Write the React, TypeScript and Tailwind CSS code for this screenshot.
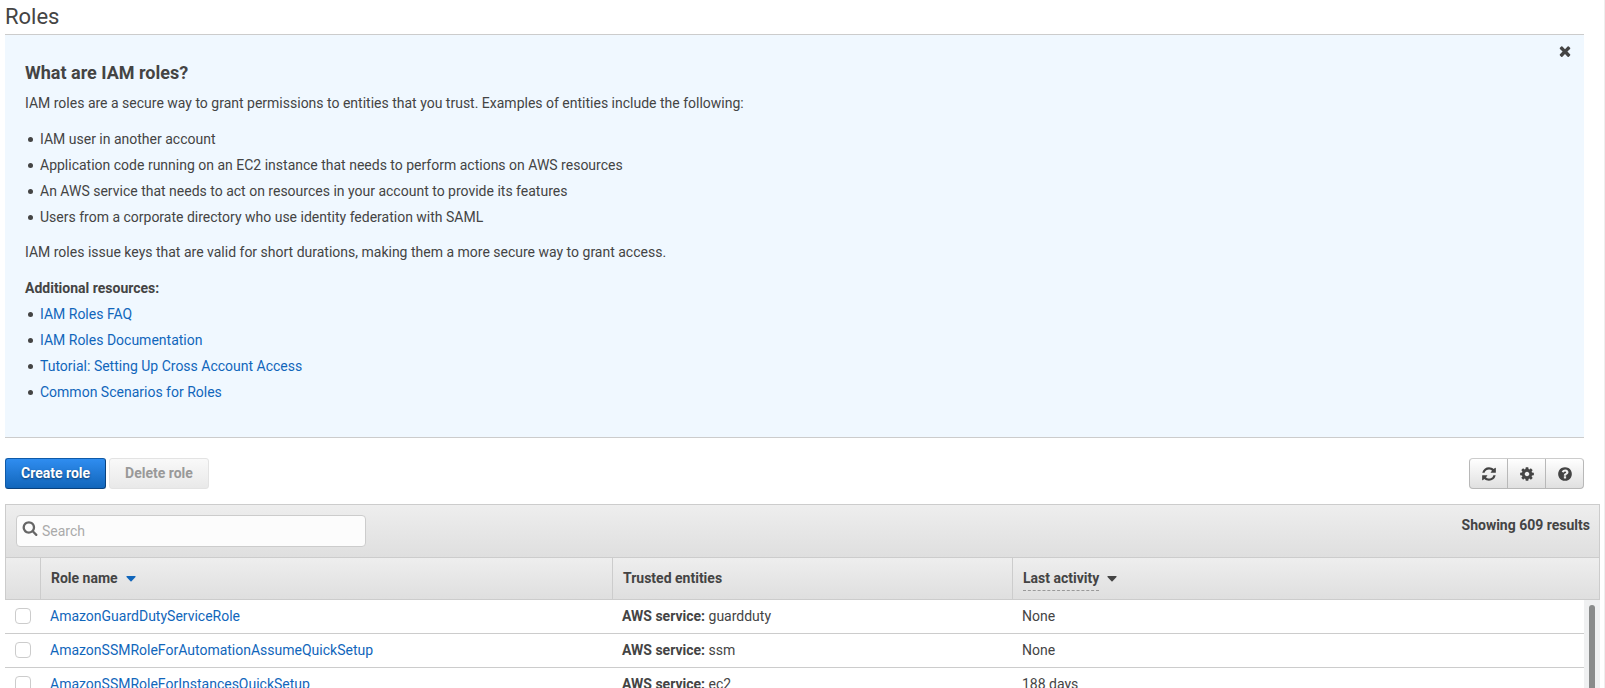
import { useState } from 'react';

const ICONS = {
  close:
    'M1490 1322q0 40-28 68l-136 136q-28 28-68 28t-68-28l-294-294-294 294q-28 28-68 28t-68-28l-136-136q-28-28-28-68t28-68l294-294-294-294q-28-28-28-68t28-68l136-136q28-28 68-28t68 28l294 294 294-294q28-28 68-28t68 28l136 136q28 28 28 68t-28 68l-294 294 294 294q28 28 28 68z',
  refresh:
    'M1639 1056q0 5-1 7-64 268-268 434.5t-478 166.5q-146 0-282.5-55t-243.5-157l-129 129q-19 19-45 19t-45-19-19-45v-448q0-26 19-45t45-19h448q26 0 45 19t19 45-19 45l-137 137q71 66 161 102t187 36q134 0 250-65t186-179q11-17 53-117 8-23 30-23h192q13 0 22.5 9.5t9.5 22.5zm25-800v448q0 26-19 45t-45 19h-448q-26 0-45-19t-19-45 19-45l138-138q-148-137-349-137-134 0-250 65t-186 179q-11 17-53 117-8 23-30 23h-199q-13 0-22.5-9.5t-9.5-22.5v-7q65-268 270-434.5t480-166.5q146 0 284 55.5t245 156.5l130-129q19-19 45-19t45 19 19 45z',
  cog: 'M1152 896q0-106-75-181t-181-75-181 75-75 181 75 181 181 75 181-75 75-181zm512-109v222q0 12-8 23t-20 13l-185 28q-19 54-39 91 35 50 107 138 10 12 10 25t-9 23q-27 37-99 108t-94 71q-12 0-26-9l-138-108q-44 23-91 38-16 136-29 186-7 28-36 28h-222q-14 0-24.5-8.5t-11.5-21.5l-28-184q-49-16-90-37l-141 107q-10 9-25 9-14 0-25-11-126-114-165-168-7-10-7-23 0-12 8-23 15-21 51-66.5t54-70.5q-27-50-41-99l-183-27q-13-2-21-12.5t-8-23.5v-222q0-12 8-23t19-13l186-28q14-46 39-92-40-57-107-138-10-12-10-24 0-10 9-23 26-36 98.5-107.5t94.5-71.5q13 0 26 10l138 107q44-23 91-38 16-136 29-186 7-28 36-28h222q14 0 24.5 8.5t11.5 21.5l28 184q49 16 90 37l142-107q9-9 24-9 13 0 25 10 129 119 165 170 7 8 7 22 0 12-8 23-15 21-51 66.5t-54 70.5q26 50 41 98l183 28q13 2 21 12.5t8 23.5z',
  help: 'M1024 1376v-192q0-14-9-23t-23-9h-192q-14 0-23 9t-9 23v192q0 14 9 23t23 9h192q14 0 23-9t9-23zm256-672q0-88-55.5-163t-138.5-116-170-41q-243 0-371 213-15 24 8 42l132 100q7 6 19 6 16 0 25-12 53-68 86-92 34-24 86-24 48 0 85.5 26t37.5 59q0 38-20 61t-68 45q-63 28-115.5 86.5t-52.5 125.5v36q0 14 9 23t23 9h192q14 0 23-9t9-23q0-19 21.5-49.5t54.5-49.5q32-18 49-28.5t46-35 44.5-48 28-60.5 12.5-81zm384 192q0 209-103 385.5t-279.5 279.5-385.5 103-385.5-103-279.5-279.5-103-385.5 103-385.5 279.5-279.5 385.5-103 385.5 103 279.5 279.5 103 385.5z',
  search:
    'M1216 832q0-185-131.5-316.5t-316.5-131.5-316.5 131.5-131.5 316.5 131.5 316.5 316.5 131.5 316.5-131.5 131.5-316.5zm512 832q0 52-38 90t-90 38q-54 0-90-38l-343-342q-179 124-399 124-143 0-273.5-55.5t-225-150-150-225-55.5-273.5 55.5-273.5 150-225 225-150 273.5-55.5 273.5 55.5 225 150 150 225 55.5 273.5q0 220-124 399l343 343q37 37 37 90z',
};

const ENTITIES = [
  'IAM user in another account',
  'Application code running on an EC2 instance that needs to perform actions on AWS resources',
  'An AWS service that needs to act on resources in your account to provide its features',
  'Users from a corporate directory who use identity federation with SAML',
];

const RESOURCES = [
  'IAM Roles FAQ',
  'IAM Roles Documentation',
  'Tutorial: Setting Up Cross Account Access',
  'Common Scenarios for Roles',
];

const ROLES = [
  { name: 'AmazonGuardDutyServiceRole', service: 'guardduty', activity: 'None' },
  { name: 'AmazonSSMRoleForAutomationAssumeQuickSetup', service: 'ssm', activity: 'None' },
  { name: 'AmazonSSMRoleForInstancesQuickSetup', service: 'ec2', activity: '188 days' },
];

function Icon({ name, className = '' }: { name: keyof typeof ICONS; className?: string }) {
  return (
    <svg viewBox="0 0 1792 1792" fill="currentColor" aria-hidden="true" className={`size-4 ${className}`}>
      <path d={ICONS[name]} />
    </svg>
  );
}

function Caret({ className = '' }: { className?: string }) {
  return (
    <svg viewBox="0 0 10 6" fill="currentColor" aria-hidden="true" className={`w-[10px] h-[6px] ${className}`}>
      <path d="M0.8 0h8.4q.6.3.3.9L5.5 5.2q-.5.4-1 0L.5.9Q.2.3.8 0z" />
    </svg>
  );
}

function Bullet({ children }: { children: React.ReactNode }) {
  return (
    <li className="flex items-center gap-[7px] pl-[3px] before:size-[5px] before:rounded-full before:bg-[#444]">
      {children}
    </li>
  );
}

function ToolButton({ icon, label }: { icon: keyof typeof ICONS; label: string }) {
  return (
    <button
      type="button"
      aria-label={label}
      className="flex items-center justify-center w-[38px] last:w-[37px] h-full border-r border-[#b8b8b8] last:border-r-0 cursor-pointer"
    >
      <Icon name={icon} />
    </button>
  );
}

export default function App() {
  const [showInfo, setShowInfo] = useState(true);
  const [query, setQuery] = useState('');
  const [selected, setSelected] = useState<string[]>([]);

  const toggle = (name: string) => {
    setSelected((prev) => (prev.includes(name) ? prev.filter((n) => n !== name) : [...prev, name]));
  };

  const rows = ROLES.filter((r) => r.name.toLowerCase().includes(query.toLowerCase()));

  return (
    <main className="h-screen overflow-hidden flex flex-col pl-[5px] pr-1 border-r border-[#eee] bg-white text-[#444] text-sm font-['Roboto',sans-serif]">
      <div className="shrink-0 mr-4">
        <h1 className="text-[22px] leading-[34px]">Roles</h1>

        {/* Info panel */}
        {showInfo && (
          <section className="relative bg-[#f0f8ff] border-y border-[#ccc] px-5 pt-5 pb-8 leading-[26px]">
            <button
              type="button"
              aria-label="Close"
              onClick={() => setShowInfo(false)}
              className="absolute top-2 right-[11px] cursor-pointer"
            >
              <Icon name="close" />
            </button>
            <h2 className="text-lg leading-[35px] font-bold">What are IAM roles?</h2>
            <p>
              IAM roles are a secure way to grant permissions to entities that you trust. Examples of entities include
              the following:
            </p>
            <ul className="mt-[10px] mb-[9px]">
              {ENTITIES.map((text) => (
                <Bullet key={text}>{text}</Bullet>
              ))}
            </ul>
            <p className="mb-[10px]">
              IAM roles issue keys that are valid for short durations, making them a more secure way to grant access.
            </p>
            <h3 className="font-bold">Additional resources:</h3>
            <ul>
              {RESOURCES.map((text) => (
                <Bullet key={text}>
                  <a href="#" className="text-[#1166bb] hover:underline">
                    {text}
                  </a>
                </Bullet>
              ))}
            </ul>
          </section>
        )}

        {/* Actions */}
        <div className="flex items-center justify-between mt-5 mb-[15px] h-[31px]">
          <div className="flex gap-[3px] h-full font-bold">
            <button
              type="button"
              className="px-[15px] pb-px rounded-[3px] border border-[#0f5aa8] border-b-[#0a427e] border-r-[#0a427e] bg-linear-to-b from-[#2f8df0] to-[#1166bb] text-white text-shadow-[0_1px_2px_rgb(0_0_0/0.5)] cursor-pointer"
            >
              Create role
            </button>
            <button
              type="button"
              disabled
              className="px-[15px] pb-px rounded-[3px] border border-[#e3e3e3] bg-linear-to-b from-[#f9f9f9] to-[#e9e9e9] text-[#999]"
            >
              Delete role
            </button>
          </div>
          <div className="flex h-full rounded border border-[#b8b8b8] border-t-[#ccc] bg-linear-to-b from-white to-[#e0e0e0]">
            <ToolButton icon="refresh" label="Refresh" />
            <ToolButton icon="cog" label="Settings" />
            <ToolButton icon="help" label="Help" />
          </div>
        </div>
      </div>

      {/* Search bar */}
      <div className="shrink-0 flex items-start justify-between h-[53px] pl-[10px] pr-[9px] pt-[10px] border border-b-0 border-[#ccc] bg-linear-to-b from-[#eee] to-[#dfdfdf]">
        <label className="relative block w-[350px]">
          <Icon name="search" className="absolute left-[6px] top-[5px] text-[#666]" />
          <input
            type="text"
            aria-label="Search"
            placeholder="Search"
            value={query}
            onChange={(e) => setQuery(e.target.value)}
            className="block w-full h-8 pl-[25px] pr-2 rounded border border-[#ccc] bg-[#fcfcfc] outline-none placeholder:text-[#aaa]"
          />
        </label>
        <span className="font-bold leading-5">Showing 609 results</span>
      </div>

      {/* Roles */}
      <div className="relative grow min-h-0 overflow-hidden">
        <table className="w-full table-fixed border-separate border-spacing-0 text-left">
          <thead>
            <tr className="h-[43px] *:p-0 *:pl-[10px] *:pb-[2px] *:border-y *:border-r *:border-[#ccc] *:bg-linear-to-b *:from-[#eee] *:to-[#dfdfdf]">
              <th className="w-9 border-l" aria-label="Select" />
              <th className="w-[572px]">
                <span className="flex items-center gap-2">
                  Role name
                  <Caret className="mt-[2px] text-[#1166bb]" />
                </span>
              </th>
              <th className="w-[400px]">Trusted entities</th>
              <th>
                <span className="flex items-center gap-2">
                  <span className="relative">
                    Last activity
                    <span className="absolute inset-x-0 -bottom-[3px] border-b border-dashed border-[#999]" />
                  </span>
                  <Caret className="mt-[2px]" />
                </span>
              </th>
            </tr>
          </thead>
          <tbody>
            {rows.map((role) => (
              <tr key={role.name} className="h-[34px] *:p-0 *:pb-px *:border-b *:border-[#ccc]">
                <td>
                  <input
                    type="checkbox"
                    aria-label={role.name}
                    checked={selected.includes(role.name)}
                    onChange={() => toggle(role.name)}
                    className="block ml-[10px] size-4 appearance-none rounded border border-[#ccc] bg-white checked:bg-[#1166bb]"
                  />
                </td>
                <td className="pl-[9px]!">
                  <a href="#" className="text-[#1166bb] hover:underline">
                    {role.name}
                  </a>
                </td>
                <td className="pl-[9px]!">
                  <b>AWS service:</b> {role.service}
                </td>
                <td className="pl-[9px]!">{role.activity}</td>
              </tr>
            ))}
          </tbody>
        </table>

        {/* Scrollbar */}
        <div className="absolute top-[43px] right-0 bottom-0 w-4 pt-[5px] pl-[5px] bg-[#eff0f1]">
          <div className="w-[6px] h-full rounded-t-full bg-[#898b8b]" />
        </div>
      </div>
    </main>
  );
}
